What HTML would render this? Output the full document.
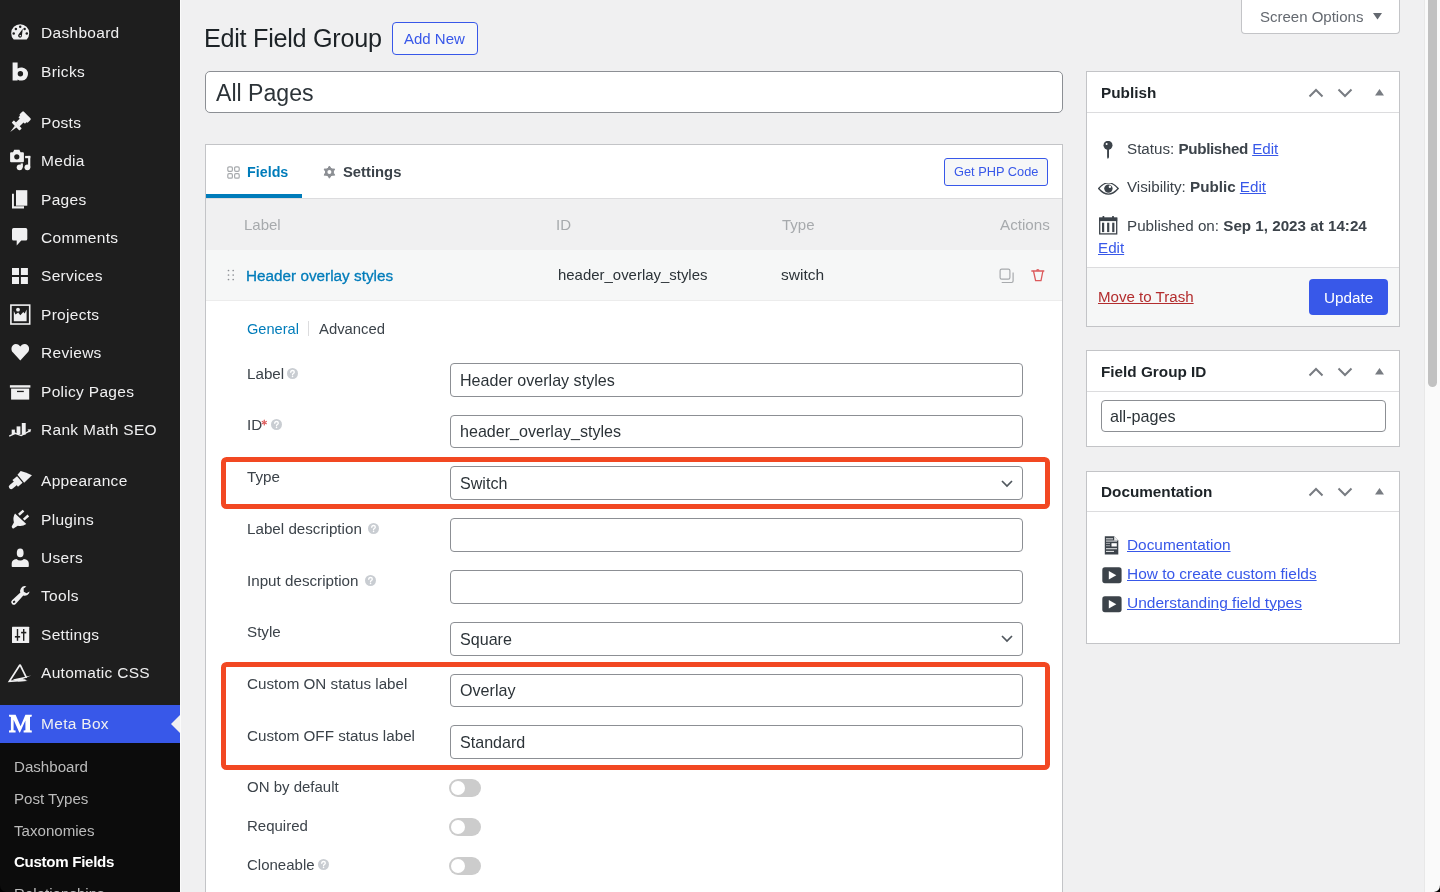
<!DOCTYPE html>
<html><head><meta charset="utf-8"><title>Edit Field Group</title>
<style>
html,body{margin:0;padding:0;}
body{width:1440px;height:892px;overflow:hidden;position:relative;background:#f0f0f1;font-family:"Liberation Sans",sans-serif;}
.t{position:absolute;white-space:nowrap;will-change:transform;}
.b{position:absolute;display:block;}
.t b{font-weight:700;}
.lk{color:#3858e9;}
u{text-underline-offset:0.6px;text-decoration-thickness:1.2px;}
</style></head><body>
<div class="b" style="left:0.00px;top:0.00px;width:180.00px;height:892.00px;background:#1e1e1e"></div>
<div class="b" style="left:0.00px;top:742.80px;width:180.00px;height:149.20px;background:#0c0c0c"></div>
<div class="b" style="left:0.00px;top:704.60px;width:180.00px;height:38.20px;background:#3858e9"></div>
<div class="b" style="left:180.00px;top:0.00px;width:1.00px;height:892.00px;background:#fbfbfb"></div>
<svg class="b" style="left:171.00px;top:714.70px;" width="9" height="18" viewBox="0 0 9 18"><path d="M9 0 L0 9 L9 18 Z" fill="#f0f0f1"/></svg>
<div class="t" style="left:40.60px;top:25.33px;font-size:15.5px;line-height:15.5px;font-weight:400;color:#f0f0f1;letter-spacing:0.3px">Dashboard</div>
<div class="t" style="left:40.60px;top:63.73px;font-size:15.5px;line-height:15.5px;font-weight:400;color:#f0f0f1;letter-spacing:0.3px">Bricks</div>
<div class="t" style="left:40.60px;top:114.83px;font-size:15.5px;line-height:15.5px;font-weight:400;color:#f0f0f1;letter-spacing:0.3px">Posts</div>
<div class="t" style="left:40.60px;top:153.23px;font-size:15.5px;line-height:15.5px;font-weight:400;color:#f0f0f1;letter-spacing:0.3px">Media</div>
<div class="t" style="left:40.60px;top:191.63px;font-size:15.5px;line-height:15.5px;font-weight:400;color:#f0f0f1;letter-spacing:0.3px">Pages</div>
<div class="t" style="left:40.60px;top:230.03px;font-size:15.5px;line-height:15.5px;font-weight:400;color:#f0f0f1;letter-spacing:0.3px">Comments</div>
<div class="t" style="left:40.60px;top:268.43px;font-size:15.5px;line-height:15.5px;font-weight:400;color:#f0f0f1;letter-spacing:0.3px">Services</div>
<div class="t" style="left:40.60px;top:306.83px;font-size:15.5px;line-height:15.5px;font-weight:400;color:#f0f0f1;letter-spacing:0.3px">Projects</div>
<div class="t" style="left:40.60px;top:345.23px;font-size:15.5px;line-height:15.5px;font-weight:400;color:#f0f0f1;letter-spacing:0.3px">Reviews</div>
<div class="t" style="left:40.60px;top:383.63px;font-size:15.5px;line-height:15.5px;font-weight:400;color:#f0f0f1;letter-spacing:0.3px">Policy Pages</div>
<div class="t" style="left:40.60px;top:422.03px;font-size:15.5px;line-height:15.5px;font-weight:400;color:#f0f0f1;letter-spacing:0.3px">Rank Math SEO</div>
<div class="t" style="left:40.60px;top:473.13px;font-size:15.5px;line-height:15.5px;font-weight:400;color:#f0f0f1;letter-spacing:0.3px">Appearance</div>
<div class="t" style="left:40.60px;top:511.53px;font-size:15.5px;line-height:15.5px;font-weight:400;color:#f0f0f1;letter-spacing:0.3px">Plugins</div>
<div class="t" style="left:40.60px;top:549.93px;font-size:15.5px;line-height:15.5px;font-weight:400;color:#f0f0f1;letter-spacing:0.3px">Users</div>
<div class="t" style="left:40.60px;top:588.33px;font-size:15.5px;line-height:15.5px;font-weight:400;color:#f0f0f1;letter-spacing:0.3px">Tools</div>
<div class="t" style="left:40.60px;top:626.73px;font-size:15.5px;line-height:15.5px;font-weight:400;color:#f0f0f1;letter-spacing:0.3px">Settings</div>
<div class="t" style="left:40.60px;top:665.13px;font-size:15.5px;line-height:15.5px;font-weight:400;color:#f0f0f1;letter-spacing:0.3px">Automatic CSS</div>
<div class="t" style="left:40.60px;top:716.23px;font-size:15.5px;line-height:15.5px;font-weight:400;color:#f0f0f1;letter-spacing:0.3px">Meta Box</div>
<div class="t" style="left:13.60px;top:759.12px;font-size:15.1px;line-height:15.1px;font-weight:400;color:#bcbcbc;">Dashboard</div>
<div class="t" style="left:13.60px;top:790.85px;font-size:15.1px;line-height:15.1px;font-weight:400;color:#bcbcbc;">Post Types</div>
<div class="t" style="left:13.60px;top:822.58px;font-size:15.1px;line-height:15.1px;font-weight:400;color:#bcbcbc;">Taxonomies</div>
<div class="t" style="left:13.60px;top:854.31px;font-size:15.1px;line-height:15.1px;font-weight:700;color:#ffffff;letter-spacing:-0.3px">Custom Fields</div>
<div class="t" style="left:13.60px;top:886.04px;font-size:15.1px;line-height:15.1px;font-weight:400;color:#bcbcbc;">Relationships</div>
<svg class="b" style="left:0.00px;top:13.20px;" width="40" height="39" viewBox="0 0 40 39"><path d="M13.7 26.5 A9 9 0 1 1 26.7 26.5 Z" fill="#f0f0f1"/><g fill="#1e1e1e"><circle cx="13.7" cy="20.5" r="1.25"/><circle cx="15.9" cy="16" r="1.25"/><circle cx="20.2" cy="13.8" r="1.25"/><circle cx="24.6" cy="16" r="1.25"/><circle cx="26.8" cy="20.5" r="1.25"/><path d="M22.8 15.8 L21.9 22.6 A1.9 1.9 0 1 1 18.5 21.6 Z"/></g><rect x="19.6" y="22" width="1.3" height="1.3" fill="#f0f0f1"/></svg>
<svg class="b" style="left:0.00px;top:51.60px;" width="40" height="39" viewBox="0 0 40 39"><path d="M12.6 10.5 H17.6 V16.6 A6.6 6.6 0 1 1 17.6 27.4 V28.4 H12.6 Z M20.4 19 A2.7 2.7 0 1 0 20.4 24.4 A2.7 2.7 0 1 0 20.4 19 Z" fill="#f0f0f1" fill-rule="evenodd"/></svg>
<svg class="b" style="left:0.00px;top:102.70px;" width="40" height="39" viewBox="0 0 40 39"><g fill="#f0f0f1" transform="translate(10.2 29) rotate(-45)"><path d="M0 0 L8 -1.2 L8 1.2 Z"/><rect x="7.6" y="-5.6" width="3.2" height="11.2" rx="0.6"/><rect x="10.4" y="-2.7" width="6.4" height="5.4"/><rect x="16.2" y="-4.6" width="2.6" height="9.2" rx="0.5"/><rect x="18.4" y="-5.8" width="5.6" height="11.6" rx="1.2"/></g></svg>
<svg class="b" style="left:0.00px;top:141.10px;" width="40" height="39" viewBox="0 0 40 39"><g fill="#f0f0f1"><path d="M10.1 12.2 Q10.1 11.2 11.1 11.2 H13 L14.2 8.8 H19.4 L20.6 11.2 H22.9 Q23.9 11.2 23.9 12.2 V20.2 Q23.9 21.2 22.9 21.2 H11.1 Q10.1 21.2 10.1 20.2 Z"/><circle cx="19.6" cy="26.3" r="2.9"/><rect x="20.6" y="22.4" width="2.3" height="4"/><circle cx="27.4" cy="26.3" r="2.9"/><rect x="28.1" y="14.9" width="2.2" height="11.4"/><rect x="25.1" y="14.9" width="5.2" height="2.3"/></g><circle cx="16.8" cy="15.8" r="2.6" fill="#1e1e1e"/></svg>
<svg class="b" style="left:0.00px;top:179.50px;" width="40" height="39" viewBox="0 0 40 39"><g fill="#f0f0f1"><rect x="16" y="10.2" width="11.3" height="15.5"/><path d="M12 13.8 H13.9 V26.3 H24 V28.4 H12 Z"/></g></svg>
<svg class="b" style="left:0.00px;top:217.90px;" width="40" height="39" viewBox="0 0 40 39"><path d="M13.6 10.1 H25.7 Q27.3 10.1 27.3 11.7 V20.9 Q27.3 22.5 25.7 22.5 H21.3 L16.7 27.6 V22.5 H13.6 Q12 22.5 12 20.9 V11.7 Q12 10.1 13.6 10.1 Z" fill="#f0f0f1"/></svg>
<svg class="b" style="left:0.00px;top:256.30px;" width="40" height="39" viewBox="0 0 40 39"><g fill="#f0f0f1"><rect x="12" y="12" width="7" height="7"/><rect x="20.9" y="12" width="7" height="7"/><rect x="12" y="21" width="7" height="7"/><rect x="20.9" y="21" width="7" height="7"/></g></svg>
<svg class="b" style="left:0.00px;top:294.70px;" width="40" height="39" viewBox="0 0 40 39"><rect x="10.9" y="10.1" width="18.8" height="18.9" fill="none" stroke="#f0f0f1" stroke-width="1.6"/><path d="M13.8 26.3 V16 L15.5 19.5 L18.2 17.5 L20.3 20.2 L23.3 17 L24.7 18.5 L26.6 14.5 V26.3 Z" fill="#f0f0f1"/><circle cx="18" cy="14.7" r="1.9" fill="#f0f0f1"/></svg>
<svg class="b" style="left:0.00px;top:333.10px;" width="40" height="39" viewBox="0 0 40 39"><path d="M20.3 27.5 L13 19.6 C10 16.3 11.7 10.9 15.8 10.9 C18 10.9 19.5 12.2 20.3 13.6 C21.1 12.2 22.6 10.9 24.8 10.9 C28.9 10.9 30.6 16.3 27.6 19.6 Z" fill="#f0f0f1"/></svg>
<svg class="b" style="left:0.00px;top:371.50px;" width="40" height="39" viewBox="0 0 40 39"><g fill="#f0f0f1"><rect x="9.9" y="13.2" width="20.5" height="2.4"/><rect x="11.1" y="16.6" width="18.1" height="11"/></g><rect x="17" y="18.8" width="6.8" height="1.3" fill="#1e1e1e"/></svg>
<svg class="b" style="left:0.00px;top:409.90px;" width="40" height="39" viewBox="0 0 40 39"><g fill="#f0f0f1"><rect x="11.7" y="19.6" width="3.2" height="4.5"/><rect x="16.6" y="16.4" width="3.8" height="7.6"/><rect x="21.8" y="13" width="3.9" height="11.6"/></g><path d="M9.2 26.1 L15.2 23.3 L21.2 25.6 L30.2 20.6" fill="none" stroke="#f0f0f1" stroke-width="1.3"/><path d="M27.5 19.6 L31.2 19.2 L30 22.6 Z" fill="#f0f0f1"/></svg>
<svg class="b" style="left:0.00px;top:461.00px;" width="40" height="39" viewBox="0 0 40 39"><g fill="#f0f0f1" transform="translate(9.4 27.3) rotate(-40)"><rect x="0" y="-2.4" width="9.5" height="4.8" rx="2.4"/><path d="M7.6 -4.3 H13.6 V4.3 H7.6 Z"/><path d="M14.9 -5.2 L19.8 -6 Q23.4 -1.6 25.6 4.6 L14.9 5.2 Z"/></g></svg>
<svg class="b" style="left:0.00px;top:499.40px;" width="40" height="39" viewBox="0 0 40 39"><g fill="#f0f0f1"><path d="M15 14.6 L26.3 25.1 Q22.2 27.9 17.8 26.7 L14.6 28.8 A1.5 1.5 0 0 1 12.2 26.6 L13.9 23.4 Q12.6 18.4 15 14.6 Z"/><rect x="18.1" y="12.4" width="6.2" height="2.5" transform="rotate(-42 21.2 13.65)"/><rect x="22.9" y="17.35" width="6.2" height="2.5" transform="rotate(-42 26 18.6)"/></g></svg>
<svg class="b" style="left:0.00px;top:537.80px;" width="40" height="39" viewBox="0 0 40 39"><g fill="#f0f0f1"><ellipse cx="20.2" cy="14.9" rx="3.4" ry="4.4"/><path d="M11.7 28.3 V25.5 Q11.7 21.7 16.5 21 Q18.2 22.6 20.2 22.6 Q22.2 22.6 23.9 21 Q28.8 21.7 28.8 25.5 V28.3 Q28.8 29 28 29 H12.5 Q11.7 29 11.7 28.3 Z"/></g></svg>
<svg class="b" style="left:0.00px;top:576.20px;" width="40" height="39" viewBox="0 0 40 39"><path d="M24.3 10.1 A5 5 0 0 0 20.4 16.6 L12 24.2 A2.6 2.6 0 1 0 15.7 27.9 L23.3 19.5 A5 5 0 0 0 29.6 15.4 L26.5 17.2 L23.8 15.8 L23.6 12.6 L26.4 10.4 Q25.3 10.1 24.3 10.1 Z M13.6 25.1 A0.95 0.95 0 1 0 14.6 26.6 A0.95 0.95 0 1 0 13.6 25.1 Z" fill="#f0f0f1" fill-rule="evenodd"/></svg>
<svg class="b" style="left:0.00px;top:614.60px;" width="40" height="39" viewBox="0 0 40 39"><rect x="12" y="11.7" width="17.2" height="16.3" rx="0.6" fill="#f0f0f1"/><g fill="#1e1e1e"><rect x="16.8" y="14" width="1.4" height="11.8"/><rect x="14.9" y="21" width="5.2" height="1.6"/><rect x="23" y="14" width="1.4" height="11.8"/><rect x="21.1" y="16.8" width="5.2" height="1.6"/></g></svg>
<svg class="b" style="left:0.00px;top:653.00px;" width="40" height="39" viewBox="0 0 40 39"><path d="M20 11.7 L9.4 28.3 L25.5 27.2" fill="none" stroke="#f0f0f1" stroke-width="1.7" stroke-linejoin="miter"/><path d="M20 11.7 L26.5 24.8" fill="none" stroke="#f0f0f1" stroke-width="1.7"/><path d="M12.5 26.6 L31.2 22.5 L18 27.9 Z" fill="#f0f0f1"/><path d="M22 26 L27.6 28.1 L17.5 28.4 Z" fill="#f0f0f1"/></svg>
<svg class="b" style="left:0.00px;top:704.10px;" width="40" height="39" viewBox="0 0 40 39"><path d="M9 10.7 H15.6 L20.6 22.2 L25.4 10.7 H31.8 V12.5 L30 12.9 V26.2 L31.8 26.6 V28.4 H23.6 V26.6 L25.4 26.2 V16.6 L20 28.4 H19.3 L13.6 15.8 V26.2 L15.6 26.6 V28.4 H9 V26.6 L10.9 26.2 V12.9 L9 12.5 Z" fill="#ffffff"/></svg>
<div class="b" style="left:1240.50px;top:-2.00px;width:159.80px;height:35.50px;background:#fff;border:1px solid #c3c4c7;border-top:none;border-radius:0 0 4px 4px;box-sizing:border-box"></div>
<div class="t" style="left:1260.00px;top:8.70px;font-size:15px;line-height:15px;font-weight:400;color:#646970;">Screen Options</div>
<svg class="b" style="left:1373.00px;top:13.00px;" width="9" height="7" viewBox="0 0 9 7"><path d="M0 0 H9 L4.5 6.5 Z" fill="#646970"/></svg>
<div class="t" style="left:204.00px;top:26.47px;font-size:25.2px;line-height:25.2px;font-weight:400;color:#1d2327;letter-spacing:-0.27px">Edit Field Group</div>
<div class="b" style="left:391.50px;top:21.50px;width:86.20px;height:33.30px;background:#f6f7f7;border:1px solid #3858e9;border-radius:4px;box-sizing:border-box"></div>
<div class="t" style="left:404.40px;top:30.50px;font-size:15px;line-height:15px;font-weight:400;color:#3858e9;">Add New</div>
<div class="b" style="left:205.00px;top:71.40px;width:858.00px;height:41.60px;background:#fff;border:1px solid #8c8f94;border-radius:5px;box-sizing:border-box"></div>
<div class="t" style="left:216.00px;top:82.25px;font-size:23.1px;line-height:23.1px;font-weight:400;color:#2c3338;">All Pages</div>
<div class="b" style="left:205.00px;top:143.50px;width:858.00px;height:756.50px;background:#fff;border:1px solid #c3c4c7;box-sizing:border-box"></div>
<div class="b" style="left:206.00px;top:198.00px;width:856.00px;height:1.00px;background:#dcdcde"></div>
<div class="b" style="left:206.00px;top:194.00px;width:96.00px;height:4.00px;background:#007cba"></div>
<svg class="b" style="left:226.50px;top:165.50px;" width="13" height="13" viewBox="0 0 13 13"><g fill="none" stroke="#a7aaad" stroke-width="1.2"><rect x="0.8" y="0.8" width="4.6" height="4.6" rx="1.3"/><rect x="7.6" y="0.8" width="4.6" height="4.6" rx="1.3"/><rect x="0.8" y="7.6" width="4.6" height="4.6" rx="1.3"/><rect x="7.6" y="7.6" width="4.6" height="4.6" rx="1.3"/></g></svg>
<div class="t" style="left:246.70px;top:165.10px;font-size:14.3px;line-height:14.3px;font-weight:700;color:#007cba;">Fields</div>
<svg class="b" style="left:322.50px;top:165.50px" width="13" height="13" viewBox="0 0 13 13"><g fill="#8c8f94" stroke="#8c8f94" stroke-width="1" stroke-linejoin="round"><polygon points="6.40,-0.00 11.68,9.15 1.12,9.15"/><polygon points="6.40,12.20 1.12,3.05 11.68,3.05"/></g><circle cx="6.399999999999977" cy="6.099999999999994" r="4.3" fill="#8c8f94"/><circle cx="6.399999999999977" cy="6.099999999999994" r="2" fill="#fff"/></svg>
<div class="t" style="left:343.00px;top:164.67px;font-size:14.8px;line-height:14.8px;font-weight:700;color:#3c434a;">Settings</div>
<div class="b" style="left:944.20px;top:157.50px;width:104.00px;height:28.00px;background:#f6f7f7;border:1px solid #3858e9;border-radius:3px;box-sizing:border-box"></div>
<div class="t" style="left:954.00px;top:165.66px;font-size:12.8px;line-height:12.8px;font-weight:400;color:#3858e9;">Get PHP Code</div>
<div class="b" style="left:206.00px;top:199.00px;width:856.00px;height:50.60px;background:#f0f0f1"></div>
<div class="t" style="left:244.40px;top:217.30px;font-size:15px;line-height:15px;font-weight:400;color:#a7aaad;">Label</div>
<div class="t" style="left:556.25px;top:217.30px;font-size:15px;line-height:15px;font-weight:400;color:#a7aaad;">ID</div>
<div class="t" style="left:781.70px;top:217.30px;font-size:15px;line-height:15px;font-weight:400;color:#a7aaad;">Type</div>
<div class="t" style="left:1000.40px;top:217.13px;font-size:15.2px;line-height:15.2px;font-weight:400;color:#a7aaad;">Actions</div>
<div class="b" style="left:206.00px;top:249.60px;width:856.00px;height:50.80px;background:#f6f7f7"></div>
<div class="b" style="left:206.00px;top:299.60px;width:856.00px;height:1.00px;background:#ececec"></div>
<svg class="b" style="left:226.70px;top:269.00px;" width="8" height="12" viewBox="0 0 8 12"><circle cx="1.5" cy="1.5" r="0.85" fill="#8c8f94"/><circle cx="1.5" cy="6" r="0.85" fill="#8c8f94"/><circle cx="1.5" cy="10.5" r="0.85" fill="#8c8f94"/><circle cx="6.2" cy="1.5" r="0.85" fill="#8c8f94"/><circle cx="6.2" cy="6" r="0.85" fill="#8c8f94"/><circle cx="6.2" cy="10.5" r="0.85" fill="#8c8f94"/></svg>
<div class="t" style="left:245.80px;top:267.75px;font-size:15.3px;line-height:15.3px;font-weight:400;color:#007cba;-webkit-text-stroke:0.3px #007cba">Header overlay styles</div>
<div class="t" style="left:557.70px;top:267.54px;font-size:14.95px;line-height:14.95px;font-weight:400;color:#2c3338;">header_overlay_styles</div>
<div class="t" style="left:781.25px;top:267.08px;font-size:15.5px;line-height:15.5px;font-weight:400;color:#2c3338;">switch</div>
<svg class="b" style="left:998.50px;top:267.50px" width="16" height="16" viewBox="0 0 16 16"><rect x="1.1" y="1.1" width="9.8" height="10.1" rx="1.6" fill="none" stroke="#a7aaad" stroke-width="1.2"/><path d="M14.1 4.4 V13.1 Q14.1 14.5 12.7 14.5 H2.7" fill="none" stroke="#a7aaad" stroke-width="1.2"/></svg>
<svg class="b" style="left:1030.50px;top:267.50px" width="16" height="16" viewBox="0 0 16 16"><g fill="none" stroke="#dc5a5c" stroke-width="1.3" stroke-linejoin="round" stroke-linecap="round"><path d="M0.7999999999999545 3.0 H12.799999999999955"/><path d="M2.599999999999909 3.5 L4.599999999999909 12.699999999999989 H10.0 L11.799999999999955 3.5"/></g><path d="M5.0 2.6999999999999886 A1.8 1.6 0 0 1 8.599999999999909 2.6999999999999886 Z" fill="#dc5a5c"/></svg>
<div class="t" style="left:246.70px;top:321.64px;font-size:14.6px;line-height:14.6px;font-weight:400;color:#007cba;">General</div>
<div class="b" style="left:308.00px;top:321.00px;width:1.20px;height:14.70px;background:#dcdcde"></div>
<div class="t" style="left:319.00px;top:321.93px;font-size:14.85px;line-height:14.85px;font-weight:400;color:#3c434a;">Advanced</div>
<div class="t" style="left:247.00px;top:365.83px;font-size:15.2px;line-height:15.2px;font-weight:400;color:#3c434a;">Label</div>
<div class="b" style="left:450.00px;top:363.20px;width:573.00px;height:33.70px;background:#fff;border:1px solid #8c8f94;border-radius:4px;box-sizing:border-box"></div>
<div class="t" style="left:459.60px;top:371.77px;font-size:16.1px;line-height:16.1px;font-weight:400;color:#2c3338;">Header overlay styles</div>
<svg class="b" style="left:287.00px;top:367.90px" width="11" height="11" viewBox="0 0 11 11"><circle cx="5.5" cy="5.5" r="5.5" fill="#c9cdd2"/><path d="M3.75 4.3 Q3.75 2.45 5.5 2.45 Q7.3 2.45 7.3 4.05 Q7.3 4.95 6.3 5.5 Q5.55 5.9 5.55 6.75" fill="none" stroke="#fff" stroke-width="1.35" stroke-linecap="round"/><circle cx="5.55" cy="8.55" r="0.8" fill="#fff"/></svg>
<div class="t" style="left:247.00px;top:417.13px;font-size:15.2px;line-height:15.2px;font-weight:400;color:#3c434a;">ID</div>
<div class="b" style="left:450.00px;top:414.70px;width:573.00px;height:33.70px;background:#fff;border:1px solid #8c8f94;border-radius:4px;box-sizing:border-box"></div>
<div class="t" style="left:459.60px;top:423.27px;font-size:16.1px;line-height:16.1px;font-weight:400;color:#2c3338;">header_overlay_styles</div>
<svg class="b" style="left:271.00px;top:419.20px" width="11" height="11" viewBox="0 0 11 11"><circle cx="5.5" cy="5.5" r="5.5" fill="#c9cdd2"/><path d="M3.75 4.3 Q3.75 2.45 5.5 2.45 Q7.3 2.45 7.3 4.05 Q7.3 4.95 6.3 5.5 Q5.55 5.9 5.55 6.75" fill="none" stroke="#fff" stroke-width="1.35" stroke-linecap="round"/><circle cx="5.55" cy="8.55" r="0.8" fill="#fff"/></svg>
<div class="t" style="left:247.00px;top:469.13px;font-size:15.2px;line-height:15.2px;font-weight:400;color:#3c434a;">Type</div>
<div class="b" style="left:450.00px;top:466.20px;width:573.00px;height:33.70px;background:#fff;border:1px solid #8c8f94;border-radius:4px;box-sizing:border-box"></div>
<div class="t" style="left:459.60px;top:474.77px;font-size:16.1px;line-height:16.1px;font-weight:400;color:#2c3338;">Switch</div>
<svg class="b" style="left:1000.80px;top:479.50px;" width="12" height="8" viewBox="0 0 12 8"><path d="M1 1 L6 6 L11 1" fill="none" stroke="#50575e" stroke-width="1.7"/></svg>
<div class="t" style="left:247.00px;top:520.83px;font-size:15.2px;line-height:15.2px;font-weight:400;color:#3c434a;">Label description</div>
<div class="b" style="left:450.00px;top:518.00px;width:573.00px;height:33.70px;background:#fff;border:1px solid #8c8f94;border-radius:4px;box-sizing:border-box"></div>
<svg class="b" style="left:367.50px;top:522.90px" width="11" height="11" viewBox="0 0 11 11"><circle cx="5.5" cy="5.5" r="5.5" fill="#c9cdd2"/><path d="M3.75 4.3 Q3.75 2.45 5.5 2.45 Q7.3 2.45 7.3 4.05 Q7.3 4.95 6.3 5.5 Q5.55 5.9 5.55 6.75" fill="none" stroke="#fff" stroke-width="1.35" stroke-linecap="round"/><circle cx="5.55" cy="8.55" r="0.8" fill="#fff"/></svg>
<div class="t" style="left:247.00px;top:572.63px;font-size:15.2px;line-height:15.2px;font-weight:400;color:#3c434a;">Input description</div>
<div class="b" style="left:450.00px;top:570.00px;width:573.00px;height:33.70px;background:#fff;border:1px solid #8c8f94;border-radius:4px;box-sizing:border-box"></div>
<svg class="b" style="left:365.00px;top:574.70px" width="11" height="11" viewBox="0 0 11 11"><circle cx="5.5" cy="5.5" r="5.5" fill="#c9cdd2"/><path d="M3.75 4.3 Q3.75 2.45 5.5 2.45 Q7.3 2.45 7.3 4.05 Q7.3 4.95 6.3 5.5 Q5.55 5.9 5.55 6.75" fill="none" stroke="#fff" stroke-width="1.35" stroke-linecap="round"/><circle cx="5.55" cy="8.55" r="0.8" fill="#fff"/></svg>
<div class="t" style="left:247.00px;top:624.13px;font-size:15.2px;line-height:15.2px;font-weight:400;color:#3c434a;">Style</div>
<div class="b" style="left:450.00px;top:622.00px;width:573.00px;height:33.70px;background:#fff;border:1px solid #8c8f94;border-radius:4px;box-sizing:border-box"></div>
<div class="t" style="left:459.60px;top:630.57px;font-size:16.1px;line-height:16.1px;font-weight:400;color:#2c3338;">Square</div>
<svg class="b" style="left:1000.80px;top:635.30px;" width="12" height="8" viewBox="0 0 12 8"><path d="M1 1 L6 6 L11 1" fill="none" stroke="#50575e" stroke-width="1.7"/></svg>
<div class="t" style="left:247.00px;top:676.33px;font-size:15.2px;line-height:15.2px;font-weight:400;color:#3c434a;">Custom ON status label</div>
<div class="b" style="left:450.00px;top:673.70px;width:573.00px;height:33.70px;background:#fff;border:1px solid #8c8f94;border-radius:4px;box-sizing:border-box"></div>
<div class="t" style="left:459.60px;top:682.27px;font-size:16.1px;line-height:16.1px;font-weight:400;color:#2c3338;">Overlay</div>
<div class="t" style="left:247.00px;top:727.93px;font-size:15.2px;line-height:15.2px;font-weight:400;color:#3c434a;">Custom OFF status label</div>
<div class="b" style="left:450.00px;top:725.30px;width:573.00px;height:33.70px;background:#fff;border:1px solid #8c8f94;border-radius:4px;box-sizing:border-box"></div>
<div class="t" style="left:459.60px;top:733.87px;font-size:16.1px;line-height:16.1px;font-weight:400;color:#2c3338;">Standard</div>
<svg class="b" style="left:260px;top:418px" width="9" height="9" viewBox="0 0 9 9"><g stroke="#dc5c5c" stroke-width="1.2" stroke-linecap="round"><path d="M4.3 2.2 V6.9"/><path d="M2.25 3.4 L6.35 5.7"/><path d="M2.25 5.7 L6.35 3.4"/></g></svg>
<div class="t" style="left:247.00px;top:779.30px;font-size:15px;line-height:15px;font-weight:400;color:#3c434a;">ON by default</div>
<svg class="b" style="left:448.9px;top:779.30px" width="32" height="18" viewBox="0 0 32 18"><rect x="0" y="0" width="32" height="18" rx="9" fill="#cccccc"/><circle cx="9" cy="9" r="7" fill="#fff"/></svg>
<div class="t" style="left:247.00px;top:818.10px;font-size:15px;line-height:15px;font-weight:400;color:#3c434a;">Required</div>
<svg class="b" style="left:448.9px;top:818.10px" width="32" height="18" viewBox="0 0 32 18"><rect x="0" y="0" width="32" height="18" rx="9" fill="#cccccc"/><circle cx="9" cy="9" r="7" fill="#fff"/></svg>
<div class="t" style="left:247.00px;top:856.90px;font-size:15px;line-height:15px;font-weight:400;color:#3c434a;">Cloneable</div>
<svg class="b" style="left:448.9px;top:856.90px" width="32" height="18" viewBox="0 0 32 18"><rect x="0" y="0" width="32" height="18" rx="9" fill="#cccccc"/><circle cx="9" cy="9" r="7" fill="#fff"/></svg>
<svg class="b" style="left:318.30px;top:858.80px" width="11" height="11" viewBox="0 0 11 11"><circle cx="5.5" cy="5.5" r="5.5" fill="#c9cdd2"/><path d="M3.75 4.3 Q3.75 2.45 5.5 2.45 Q7.3 2.45 7.3 4.05 Q7.3 4.95 6.3 5.5 Q5.55 5.9 5.55 6.75" fill="none" stroke="#fff" stroke-width="1.35" stroke-linecap="round"/><circle cx="5.55" cy="8.55" r="0.8" fill="#fff"/></svg>
<div class="b" style="left:220.50px;top:456.70px;width:829.00px;height:52.00px;border:5.4px solid #f24822;border-radius:5.5px;box-sizing:border-box"></div>
<div class="b" style="left:220.50px;top:661.70px;width:829.00px;height:108.60px;border:5.4px solid #f24822;border-radius:5.5px;box-sizing:border-box"></div>
<div class="b" style="left:1086.00px;top:71.40px;width:314.30px;height:255.30px;background:#fff;border:1px solid #c3c4c7;box-sizing:border-box"></div>
<div class="b" style="left:1087.00px;top:111.80px;width:312.30px;height:1.00px;background:#dcdcde"></div>
<div class="t" style="left:1100.70px;top:85.05px;font-size:15.3px;line-height:15.3px;font-weight:700;color:#1d2327;">Publish</div>
<svg class="b" style="left:1307.50px;top:87.90px;" width="16" height="10" viewBox="0 0 16 10"><path d="M1.5 8.5 L8 2 L14.5 8.5" fill="none" stroke="#787c82" stroke-width="2"/></svg>
<svg class="b" style="left:1336.50px;top:87.90px;" width="16" height="10" viewBox="0 0 16 10"><path d="M1.5 1.5 L8 8 L14.5 1.5" fill="none" stroke="#787c82" stroke-width="2"/></svg>
<svg class="b" style="left:1375.40px;top:88.60px;" width="9" height="7" viewBox="0 0 9 7"><path d="M0 6.5 H9 L4.5 0 Z" fill="#787c82"/></svg>
<svg class="b" style="left:1103.00px;top:140.50px" width="14" height="20" viewBox="0 0 14 20"><circle cx="5" cy="4.300000000000011" r="4.5" fill="#3c434a"/><circle cx="3.599999999999909" cy="2.9000000000000057" r="1" fill="#fff"/><path d="M4.099999999999909 7.5 H6 V16.099999999999994 Q5.900000000000091 17.30000000000001 4.7999999999999545 17.900000000000006 Q4.099999999999909 16.900000000000006 4.099999999999909 16.099999999999994 Z" fill="#3c434a"/></svg>
<div class="t" style="left:1127.40px;top:141.13px;font-size:15.2px;line-height:15.2px;font-weight:400;color:#3c434a;">Status: <b style="letter-spacing:-0.35px">Published</b> <u class="lk">Edit</u></div>
<svg class="b" style="left:1097.80px;top:182.80px" width="22" height="14" viewBox="0 0 22 14"><path d="M0.6000000000001364 5.5 Q10.400000000000091 -5.800000000000011 20.200000000000045 5.5 Q10.400000000000091 16.799999999999983 0.6000000000001364 5.5 Z" fill="none" stroke="#3c434a" stroke-width="1.3"/><circle cx="10.400000000000091" cy="5.599999999999994" r="4.2" fill="#3c434a"/><circle cx="11.900000000000091" cy="3.799999999999983" r="1.2" fill="#fff"/></svg>
<div class="t" style="left:1127.20px;top:179.33px;font-size:15.2px;line-height:15.2px;font-weight:400;color:#3c434a;">Visibility: <b>Public</b> <u class="lk">Edit</u></div>
<svg class="b" style="left:1098.80px;top:215.50px" width="20" height="20" viewBox="0 0 20 20"><rect x="0.7000000000000455" y="2.0999999999999943" width="17" height="15.8" fill="none" stroke="#3c434a" stroke-width="1.3"/><rect x="0.20000000000004547" y="1.6999999999999886" width="18" height="3.4" fill="#3c434a"/><g fill="#3c434a"><rect x="3.5" y="-0.19999999999998863" width="1.8" height="4" rx="0.9"/><rect x="13.100000000000136" y="-0.19999999999998863" width="1.8" height="4" rx="0.9"/><rect x="3.0" y="6.699999999999989" width="2.2" height="9.4"/><rect x="8.100000000000136" y="6.699999999999989" width="2.2" height="9.4"/><rect x="13.200000000000045" y="6.699999999999989" width="2.2" height="9.4"/></g></svg>
<div class="t" style="left:1127.20px;top:217.53px;font-size:15.2px;line-height:15.2px;font-weight:400;color:#3c434a;">Published on: <b>Sep 1, 2023 at 14:24</b></div>
<div class="t" style="left:1098.30px;top:240.43px;font-size:15.2px;line-height:15.2px;font-weight:400;color:#3858e9;"><u class="lk">Edit</u></div>
<div class="b" style="left:1087.00px;top:267.00px;width:312.30px;height:58.70px;background:#f6f7f7;border-top:1px solid #dcdcde;box-sizing:border-box"></div>
<div class="t" style="left:1098.30px;top:288.72px;font-size:15.1px;line-height:15.1px;font-weight:400;color:#b32d2e;"><u>Move to Trash</u></div>
<div class="b" style="left:1309.00px;top:279.30px;width:79.00px;height:35.60px;background:#3858e9;border-radius:4px"></div>
<div class="t" style="left:1324.00px;top:289.75px;font-size:15.3px;line-height:15.3px;font-weight:400;color:#ffffff;">Update</div>
<div class="b" style="left:1086.00px;top:350.40px;width:314.30px;height:96.90px;background:#fff;border:1px solid #c3c4c7;box-sizing:border-box"></div>
<div class="b" style="left:1087.00px;top:390.80px;width:312.30px;height:1.00px;background:#dcdcde"></div>
<div class="t" style="left:1100.70px;top:364.05px;font-size:15.3px;line-height:15.3px;font-weight:700;color:#1d2327;">Field Group ID</div>
<svg class="b" style="left:1307.50px;top:366.90px;" width="16" height="10" viewBox="0 0 16 10"><path d="M1.5 8.5 L8 2 L14.5 8.5" fill="none" stroke="#787c82" stroke-width="2"/></svg>
<svg class="b" style="left:1336.50px;top:366.90px;" width="16" height="10" viewBox="0 0 16 10"><path d="M1.5 1.5 L8 8 L14.5 1.5" fill="none" stroke="#787c82" stroke-width="2"/></svg>
<svg class="b" style="left:1375.40px;top:367.60px;" width="9" height="7" viewBox="0 0 9 7"><path d="M0 6.5 H9 L4.5 0 Z" fill="#787c82"/></svg>
<div class="b" style="left:1100.60px;top:399.60px;width:285.10px;height:32.80px;background:#fff;border:1px solid #8c8f94;border-radius:4px;box-sizing:border-box"></div>
<div class="t" style="left:1110.20px;top:408.49px;font-size:16.2px;line-height:16.2px;font-weight:400;color:#2c3338;">all-pages</div>
<div class="b" style="left:1086.00px;top:470.50px;width:314.30px;height:173.40px;background:#fff;border:1px solid #c3c4c7;box-sizing:border-box"></div>
<div class="b" style="left:1087.00px;top:511.20px;width:312.30px;height:1.00px;background:#dcdcde"></div>
<div class="t" style="left:1100.70px;top:484.15px;font-size:15.3px;line-height:15.3px;font-weight:700;color:#1d2327;">Documentation</div>
<svg class="b" style="left:1307.50px;top:487.00px;" width="16" height="10" viewBox="0 0 16 10"><path d="M1.5 8.5 L8 2 L14.5 8.5" fill="none" stroke="#787c82" stroke-width="2"/></svg>
<svg class="b" style="left:1336.50px;top:487.00px;" width="16" height="10" viewBox="0 0 16 10"><path d="M1.5 1.5 L8 8 L14.5 1.5" fill="none" stroke="#787c82" stroke-width="2"/></svg>
<svg class="b" style="left:1375.40px;top:487.70px;" width="9" height="7" viewBox="0 0 9 7"><path d="M0 6.5 H9 L4.5 0 Z" fill="#787c82"/></svg>
<svg class="b" style="left:1104.00px;top:536.00px" width="16" height="20" viewBox="0 0 16 20"><path d="M0.7999999999999545 0.2999999999999545 H10.200000000000045 L14.299999999999955 4.399999999999977 V18.600000000000023 H0.7999999999999545 Z" fill="#3c434a"/><path d="M10.200000000000045 0.2999999999999545 V4.399999999999977 H14.299999999999955 Z" fill="#ffffff" opacity="0.9"/><g fill="#fff"><rect x="2" y="2.3999999999999773" width="7" height="0.9"/><rect x="2" y="4.600000000000023" width="11" height="0.9"/><rect x="2" y="6.899999999999977" width="4" height="0.9" opacity="0.6"/><rect x="7.5" y="7.2000000000000455" width="5.3" height="3.3"/><rect x="2" y="9.299999999999955" width="4" height="0.9" opacity="0.6"/><rect x="2" y="12.299999999999955" width="11" height="0.9"/><rect x="2" y="14.899999999999977" width="8" height="0.9"/></g></svg>
<div class="t" style="left:1127.20px;top:536.96px;font-size:15.4px;line-height:15.4px;font-weight:400;color:#3858e9;"><u>Documentation</u></div>
<svg class="b" style="left:1102.00px;top:566.60px" width="21" height="17" viewBox="0 0 21 17"><rect x="0.3" y="0.3" width="19.3" height="15.9" rx="2.6" fill="#3c434a"/><path d="M6.8 3.9 L14.3 8.3 L6.8 12.600000000000001 Z" fill="#fff"/></svg>
<div class="t" style="left:1127.20px;top:566.22px;font-size:15.45px;line-height:15.45px;font-weight:400;color:#3858e9;"><u>How to create custom fields</u></div>
<svg class="b" style="left:1102.00px;top:595.70px" width="21" height="17" viewBox="0 0 21 17"><rect x="0.3" y="0.3" width="19.3" height="15.9" rx="2.6" fill="#3c434a"/><path d="M6.8 3.9 L14.3 8.3 L6.8 12.600000000000001 Z" fill="#fff"/></svg>
<div class="t" style="left:1127.20px;top:595.28px;font-size:15.5px;line-height:15.5px;font-weight:400;color:#3858e9;"><u>Understanding field types</u></div>
<div class="b" style="left:1423.50px;top:0.00px;width:16.50px;height:892.00px;background:#fafafa;border-left:1px solid #e8e8e8;box-sizing:border-box"></div>
<div class="b" style="left:1427.80px;top:-6.00px;width:8.80px;height:392.70px;background:#c1c1c1;border-radius:4.5px"></div>
<svg class="b" style="left:1432.00px;top:884.00px;" width="8" height="8" viewBox="0 0 8 8"><path d="M8 1 Q8 7 2 8 H8 Z" fill="#000"/></svg>
<svg class="b" style="left:0.00px;top:884.00px;" width="8" height="8" viewBox="0 0 8 8"><path d="M0 1 Q0 7 6 8 H0 Z" fill="#000"/></svg>
</body></html>
